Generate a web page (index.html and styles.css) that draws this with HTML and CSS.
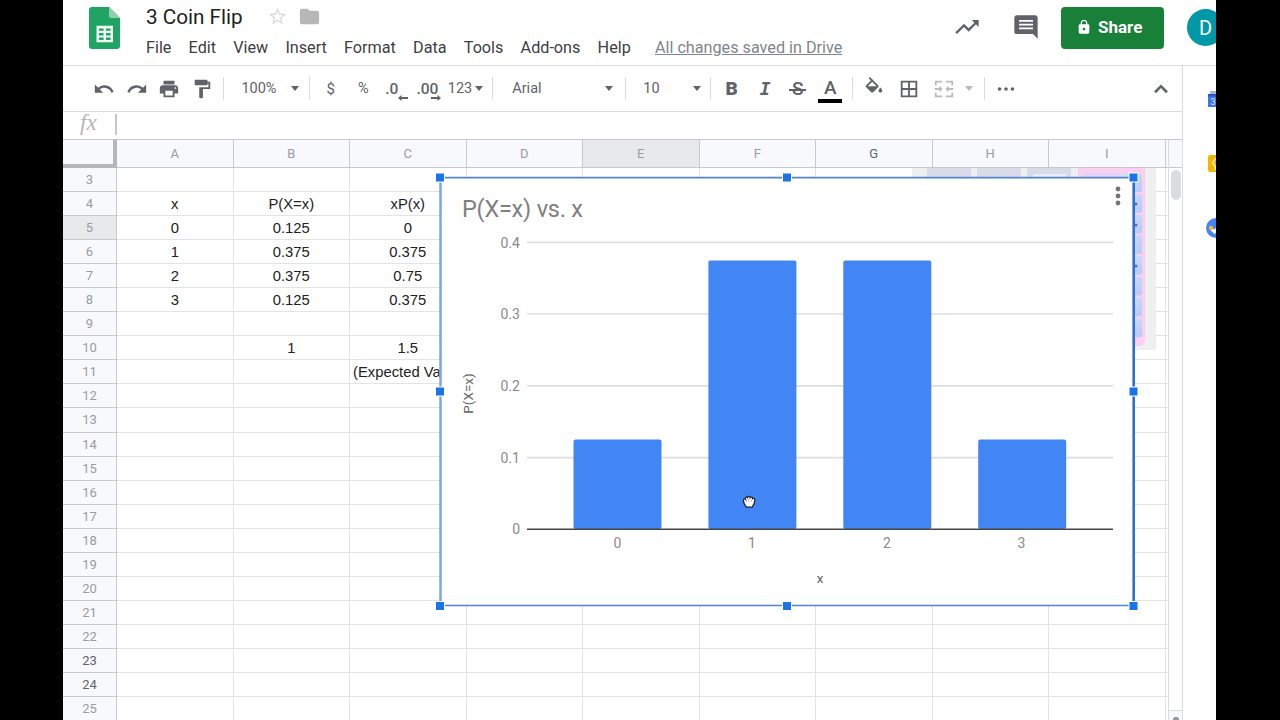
FILE: index.html
```html
<!DOCTYPE html>
<html lang="en">
<head>
    <meta charset="UTF-8">
    <meta name="viewport" content="width=device-width, initial-scale=1.0">
    <title>3 Coin Flip</title>
    <link rel="stylesheet" href="styles.css">
</head>
<body>
    <div class="app">
        <div class="main">
            <!-- Header -->
            <header class="header">
                <svg class="logo" viewBox="0 0 31 42" width="31" height="42">
                    <path fill="#1fa463" d="M3 0h17l11 11v28a3 3 0 0 1-3 3H3a3 3 0 0 1-3-3V3a3 3 0 0 1 3-3z"/>
                    <path fill="#8ed1b1" d="M20 0l11 11H22a2 2 0 0 1-2-2z"/>
                    <path fill="#f1f8f4" fill-rule="evenodd" d="M7.500 18.800h16.500v16.500H7.500zM10 21.400v2.400h4.600v-2.400zM17 21.400v2.400h4.600v-2.400zM10 26v2.400h4.600V26zM17 26v2.400h4.600V26zM10 30.500v2.400h4.600v-2.400zM17 30.500v2.400h4.600v-2.400z"/>
                </svg>
                <div class="titles">
                    <div class="title-row">
                        <span class="doc-title">3 Coin Flip</span>
                        <svg class="star" viewBox="0 0 24 24" width="21" height="21"><path fill="#dcdcdc" d="M22 9.240l-7.190-.62L12 2 9.190 8.630 2 9.240l5.460 4.730L5.820 21 12 17.270 18.180 21l-1.630-7.030L22 9.240zM12 15.400l-3.760 2.270 1-4.280-3.320-2.880 4.380-.38L12 6.100l1.710 4.040 4.380.38-3.320 2.880 1 4.280L12 15.400z"/></svg>
                        <svg class="folder" viewBox="0 0 24 24" width="23" height="23"><path fill="#b7b7b7" d="M10 4H4c-1.100 0-1.990.9-1.990 2L2 18c0 1.100.9 2 2 2h16c1.100 0 2-.9 2-2V8c0-1.100-.9-2-2-2h-8l-2-2z"/></svg>
                    </div>
                    <nav class="menu">
                        <span>File</span><span>Edit</span><span>View</span><span>Insert</span><span>Format</span><span>Data</span><span>Tools</span><span>Add-ons</span><span>Help</span>
                        <span class="saved">All changes saved in Drive</span>
                    </nav>
                </div>
                <svg class="trend" viewBox="0 0 24 24" width="28" height="28"><path fill="#5f6368" d="M16 6l2.290 2.290-4.880 4.880-4-4L2 16.590 3.410 18l6-6 4 4 6.300-6.290L22 12V6z"/></svg>
                <svg class="comment" viewBox="0 0 24 24" width="28" height="28"><path fill="#5f6368" d="M21.990 4c0-1.100-.89-2-1.990-2H4c-1.100 0-2 .9-2 2v12c0 1.100.9 2 2 2h14l4 4-.01-18zM18 14H6v-1.500h12V14zm0-3.200H6V9.300h12v1.500zm0-3.200H6V6h12v1.600z"/></svg>
                <button class="share">
                    <svg viewBox="0 0 24 24" width="16" height="16"><path fill="#fff" d="M18 8h-1V6c0-2.760-2.240-5-5-5S7 3.240 7 6v2H6c-1.100 0-2 .9-2 2v10c0 1.100.9 2 2 2h12c1.100 0 2-.9 2-2V10c0-1.100-.9-2-2-2zm-6 9c-1.100 0-2-.9-2-2s.9-2 2-2 2 .9 2 2-.9 2-2 2zm3.100-9H8.900V6c0-1.710 1.390-3.100 3.100-3.100s3.100 1.390 3.100 3.100v2z"/></svg>
                    Share
                </button>
            </header>

            <!-- Toolbar -->
            <div class="toolbar">
                <span class="tool"><svg viewBox="0 0 24 24"><path d="M12.500 8c-2.650 0-5.050.99-6.900 2.600L2 7v9h9l-3.620-3.620c1.390-1.160 3.160-1.880 5.120-1.880 3.540 0 6.550 2.310 7.600 5.500l2.370-.78C21.080 11.030 17.150 8 12.500 8z"/></svg></span>
                <span class="tool"><svg viewBox="0 0 24 24"><path d="M18.400 10.600C16.550 8.990 14.150 8 11.500 8c-4.650 0-8.580 3.030-9.960 7.220L3.900 16c1.050-3.190 4.050-5.500 7.600-5.500 1.950 0 3.730.72 5.120 1.880L13 16h9V7l-3.600 3.600z"/></svg></span>
                <span class="tool"><svg viewBox="0 0 24 24"><path d="M19 8H5c-1.660 0-3 1.340-3 3v6h4v4h12v-4h4v-6c0-1.660-1.340-3-3-3zm-3 11H8v-5h8v5zm3-7c-.55 0-1-.45-1-1s.45-1 1-1 1 .45 1 1-.45 1-1 1zm-1-9H6v4h12V3z"/></svg></span>
                <span class="tool"><svg viewBox="0 0 24 24"><path d="M18 4V3c0-.55-.45-1-1-1H5c-.55 0-1 .45-1 1v4c0 .55.45 1 1 1h12c.55 0 1-.45 1-1V6h1v4H9v11c0 .55.45 1 1 1h2c.55 0 1-.45 1-1v-9h8V4h-3z"/></svg></span>
                <span class="sep"></span>
                <span class="select zoom">100%<i class="arrow"></i></span>
                <span class="sep"></span>
                <span class="tool num dollar">$</span>
                <span class="tool num percent">%</span>
                <span class="tool num dec less">.0<svg class="dec-arrow" viewBox="0 0 10 6"><path d="M0 3l3.500-3v2H10v2H3.500v2z"/></svg></span>
                <span class="tool num dec">.00<svg class="dec-arrow" viewBox="0 0 10 6"><path d="M10 3L6.500 0v2H0v2h6.500v2z"/></svg></span>
                <span class="select formats">123<i class="arrow"></i></span>
                <span class="sep"></span>
                <span class="select font">Arial<i class="arrow"></i></span>
                <span class="sep"></span>
                <span class="select size">10<i class="arrow"></i></span>
                <span class="sep"></span>
                <span class="tool bold">B</span>
                <span class="tool italic">I</span>
                <span class="tool strike">S</span>
                <span class="tool color">A</span>
                <span class="sep"></span>
                <span class="tool fill"><svg viewBox="0 0 24 24"><path d="M16.560 8.940L7.620 0 6.210 1.410l2.380 2.380-5.150 5.150c-.59.59-.59 1.540 0 2.120l5.500 5.500c.29.29.68.44 1.060.44s.77-.15 1.060-.44l5.500-5.500c.59-.58.59-1.530 0-2.120zM5.210 10L10 5.210 14.790 10H5.210zM19 11.500s-2 2.170-2 3.500c0 1.100.9 2 2 2s2-.9 2-2c0-1.330-2-3.500-2-3.500z"/></svg></span>
                <span class="tool borders"><svg viewBox="0 0 24 24"><path d="M3 3v18h18V3H3zm8 16H5v-6h6v6zm0-8H5V5h6v6zm8 8h-6v-6h6v6zm0-8h-6V5h6v6z"/></svg></span>
                <span class="tool merge"><svg viewBox="0 0 24 24"><path d="M2 3h8v2H4v3H2zM14 3h8v5h-2V5h-6zM2 16h2v3h6v2H2zM20 16h2v5h-8v-2h6zM2 11h5V8.500l3.500 3.500L7 15.500V13H2zM22 11h-5V8.500L13.500 12l3.500 3.500V13h5z"/></svg><i class="arrow light"></i></span>
                <span class="sep"></span>
                <span class="tool more"><svg viewBox="0 0 24 24"><path d="M5 10a2 2 0 1 0 0 4 2 2 0 0 0 0-4zm7 0a2 2 0 1 0 0 4 2 2 0 0 0 0-4zm7 0a2 2 0 1 0 0 4 2 2 0 0 0 0-4z"/></svg></span>
                <span class="tool collapse"><svg viewBox="0 0 24 24"><path d="M12 7l-7.500 7.500 2 2L12 11l5.500 5.500 2-2z"/></svg></span>
            </div>

            <div class="formula"><span class="fx">fx</span><span class="caret"></span></div>

            <!-- Sheet -->
            <div class="sheet">
                <div class="grid" id="grid"></div>
                <div class="scroll">
                    <div class="scroll-head"></div>
                    <div class="thumb"></div>
                    <div class="scroll-foot"></div>
                </div>

                <!-- Picture and chart floating over the cells -->
                <svg class="overlay" viewBox="63 168 1105 552" width="1105" height="552">
                    <defs>
                        <linearGradient id="key" x1="0" y1="0" x2="1" y2="1">
                            <stop offset="0" stop-color="#d3e3fb"/>
                            <stop offset="1" stop-color="#b9c8f2"/>
                        </linearGradient>
                    </defs>
                    <rect x="912" y="168" width="244" height="182" fill="#efeff0"/>
                    <rect x="927" y="168" width="44" height="12" fill="#d9dce8"/>
                    <rect x="977" y="168" width="44" height="12" fill="#d9dce8"/>
                    <rect x="1027" y="168" width="44" height="12" fill="#d9dce8"/>
                    <rect x="1033" y="174" width="33" height="4" fill="#e9effa"/>
                    <path d="M1078 168h67v172a6 6 0 0 1-6 6h-61z" fill="#f9cff2"/>
                    <rect x="1084" y="173" width="52" height="5" fill="#e3d3f3"/>
                    <g id="keys" fill="url(#key)"></g>
                    <g fill="#5570b8">
                        <circle cx="1136" cy="204" r="1.500"/><circle cx="1136" cy="225" r="1.500"/><circle cx="1136" cy="266" r="1.500"/>
                    </g>

                    <rect x="440.500" y="178" width="693" height="427.500" fill="#fff"/>
                    <path d="M440.500 177V606" stroke="#7ba7e6" stroke-width="2.500"/>
                    <path d="M440 177.600H1134M440 605.500H1134" stroke="#5583cb" stroke-width="1.700"/>
                    <path d="M1133.700 177V606" stroke="#2f6fd2" stroke-width="2.600"/>

                    <text class="chart-title" x="462" y="217" textLength="121">P(X=x) vs. x</text>
                    <g fill="#757575">
                        <circle cx="1118" cy="189" r="2.400"/><circle cx="1118" cy="196" r="2.400"/><circle cx="1118" cy="203" r="2.400"/>
                    </g>
                    <path d="M527 242.300H1113M527 314H1113M527 385.800H1113M527 457.700H1113" stroke="#dedede" stroke-width="1.700"/>
                    <g id="bars" fill="#4285f4"></g>
                    <path d="M527 529.300H1113" stroke="#444" stroke-width="1.500"/>
                    <g class="axis" text-anchor="end">
                        <text x="520" y="247.500">0.4</text>
                        <text x="520" y="319">0.3</text>
                        <text x="520" y="390.500">0.2</text>
                        <text x="520" y="462.500">0.1</text>
                        <text x="520" y="534">0</text>
                    </g>
                    <g class="axis" text-anchor="middle">
                        <text x="617.500" y="548">0</text>
                        <text x="752" y="548">1</text>
                        <text x="887" y="548">2</text>
                        <text x="1021.500" y="548">3</text>
                    </g>
                    <text class="axis-title" text-anchor="middle" x="820" y="583">x</text>
                    <text class="axis-title" text-anchor="middle" transform="translate(472.500 393.500) rotate(-90)">P(X=x)</text>

                    <g id="handles" fill="#1a73e8" stroke="#fff" stroke-width="1"></g>

                    <!-- Grab cursor -->
                    <path d="M743.500 500.500c-.3-1.500 1.200-2 2-1.200-.6-2.200 1-3 2-1.600.3-1.700 2.400-1.700 2.700 0 .9-1.200 2.500-.7 2.500.9 1.200-.8 2.400 0 2.200 1.500-.2 3.200-1.100 4.700-2.700 7h-5.800c-1.500-1.800-3.100-3.800-2.900-6.600z" fill="#fff" stroke="#222" stroke-width="1.200"/>
                    <path d="M746.300 499.500v3M748.800 498.500v3.500M751.300 499v3" stroke="#999" stroke-width=".6"/>
                </svg>
            </div>
        </div>

        <!-- Side panel -->
        <aside class="side">
            <div class="side-top"><div class="avatar">D</div></div>
            <svg class="side-icon calendar" viewBox="0 0 20 18" width="20" height="18"><path fill="#a9b7cc" d="M2 0h16v4H2z"/><path fill="#3b78e7" d="M0 3h19v13H0z"/><path fill="#2a56c6" d="M0 3h19v2.500H0z"/><text x="2.500" y="13.500" font-size="9" fill="#dfe8fb">3</text></svg>
            <svg class="side-icon keep" viewBox="0 0 20 18" width="20" height="18"><rect width="20" height="17" rx="2" fill="#f4b400"/><path fill="none" stroke="#fff3cf" stroke-width="1.500" d="M7.500 11.500c-4-2.500-2.500-8 2.500-8s6.500 5.500 2.500 8v2.500h-5z"/></svg>
            <svg class="side-icon tasks" viewBox="0 0 20 20" width="20" height="20"><circle cx="10" cy="10" r="10" fill="#4285f4"/><path d="M5 10.500l3.500 3.500L15 6" fill="none" stroke="#fff" stroke-width="3"/><circle cx="5" cy="10" r="2.200" fill="#f5b63c"/></svg>
        </aside>
    </div>

    <script>
        const columns = ['A', 'B', 'C', 'D', 'E', 'F', 'G', 'H', 'I'];
        const values = {
            A4: 'x', B4: 'P(X=x)', C4: 'xP(x)',
            A5: '0', B5: '0.125', C5: '0',
            A6: '1', B6: '0.375', C6: '0.375',
            A7: '2', B7: '0.375', C7: '0.75',
            A8: '3', B8: '0.125', C8: '0.375',
            B10: '1', C10: '1.5',
            C11: '(Expected Va'
        };
        const grid = document.getElementById('grid');

        function addCell(className, text) {
            const cell = document.createElement('div');
            cell.className = className;
            cell.textContent = text || '';
            grid.appendChild(cell);
        }

        // Column headers
        addCell('corner');
        columns.forEach(col => {
            addCell('col-head' + (col === 'E' ? ' active' : '') + (col === 'G' ? ' dark' : ''), col);
        });
        addCell('col-head edge');

        // Rows 3 to 25
        for (let row = 3; row <= 25; row++) {
            addCell('row-head' + (row === 5 ? ' active' : '') + (row === 23 || row === 24 ? ' dark' : ''), String(row));
            columns.forEach(col => addCell('cell' + (col + row === 'C11' ? ' long' : ''), values[col + row]));
            addCell('cell edge');
        }

        function addRect(parent, x, y, width, height, rx) {
            const rect = document.createElementNS('http://www.w3.org/2000/svg', 'rect');
            Object.entries({ x, y, width, height, rx }).forEach(([name, value]) => rect.setAttribute(name, value));
            document.getElementById(parent).appendChild(rect);
        }

        // Keys of the picture behind the chart
        for (let i = 0; i < 8; i++) {
            addRect('keys', 1120, 173.5 + i * 20.7, 22, 18.5, 2);
        }

        // Bars of the chart
        const base = 529;
        [0.125, 0.375, 0.375, 0.125].forEach((p, i) => {
            const height = p * 716;
            addRect('bars', 573.5 + i * 134.9, base - height, 88, height, 2);
        });

        // Resize handles
        [440, 787, 1133.5].forEach(x => {
            [177.5, 391.5, 606].forEach(y => {
                if (x !== 787 || y !== 391.5) {
                    addRect('handles', x - 4.5, y - 4.5, 9, 9, 0);
                }
            });
        });
    </script>
</body>
</html>
```

FILE: styles.css
```css
* {
    box-sizing: border-box;
}
body {
    margin: 0;
    background-color: #000;
    font-family: Roboto, Arial, sans-serif;
    overflow: hidden;
}
.app {
    display: flex;
    width: 1153px;
    height: 720px;
    margin-left: 63px;
    background-color: #fff;
    overflow: hidden;
}
.main {
    width: 1119px;
    display: flex;
    flex-direction: column;
}

/* Header */
.header {
    display: flex;
    height: 66px;
    padding-left: 26px;
    border-bottom: 1px solid #dadce0;
}
.logo {
    flex: none;
    margin-top: 7px;
}
.titles {
    flex: none;
    width: 733px;
    padding-left: 26px;
}
.title-row {
    display: flex;
    align-items: center;
    height: 33px;
}
.doc-title {
    width: 121px;
    font-size: 20.7px;
    color: #202124;
    white-space: nowrap;
}
.folder {
    margin-left: 10px;
}
.menu {
    display: flex;
    gap: 17.2px;
    height: 28px;
    align-items: center;
    font-size: 16.2px;
    color: #3c4043;
    white-space: nowrap;
}
.saved {
    margin-left: 7px;
    color: #80868b;
    text-decoration: underline;
}
.trend,
.comment {
    margin-top: 13px;
    flex: none;
}
.trend {
    margin-left: 100px;
}
.comment {
    margin-left: 31px;
}
.share {
    display: flex;
    align-items: center;
    gap: 6px;
    flex: none;
    width: 103px;
    height: 42px;
    margin: 7px 0 0 21px;
    padding: 0 0 2px 15px;
    border: none;
    border-radius: 4px;
    background-color: #188038;
    color: #fff;
    font: bold 17px Roboto, sans-serif;
}

/* Toolbar */
.toolbar {
    display: flex;
    align-items: center;
    height: 46px;
    padding-left: 25px;
    border-bottom: 1px solid #dadce0;
    font-size: 14.5px;
    color: #5f6368;
}
.tool {
    display: flex;
    align-items: center;
    justify-content: center;
    flex: none;
    width: 32.6px;
    height: 30px;
}
.tool svg {
    flex: none;
    width: 22px;
    height: 22px;
    fill: #5f6368;
}
.sep {
    flex: none;
    width: 1px;
    height: 23px;
    margin-left: 5px;
    background-color: #dadce0;
}
.select {
    display: flex;
    flex: none;
    align-items: center;
    justify-content: space-between;
}
.arrow {
    border: 4.5px solid transparent;
    border-top: 5px solid #5f6368;
    border-bottom: 0;
}
.zoom {
    width: 58px;
    margin: 0 5px 0 17px;
}
.num {
    font-size: 15px;
}
.dollar {
    margin-left: 4px;
}
.percent {
    font-size: 14.5px;
}
.dec {
    position: relative;
    padding-right: 2px;
    font-weight: 500;
    font-size: 15.5px;
}
.less {
    padding-right: 8px;
}
.tool .dec-arrow {
    position: absolute;
    right: 4px;
    bottom: 3px;
    width: 10px;
    height: 6px;
}
.formats {
    width: 35px;
    margin: 0 4px 0 3px;
}
.font {
    width: 101px;
    margin: 0 7px 0 19.5px;
}
.size {
    width: 58px;
    margin: 0 4px 0 17px;
}
.bold {
    margin-left: 4px;
    font-size: 19px;
    font-weight: 900;
}
.italic {
    margin-left: 1px;
    font: italic bold 18px "DejaVu Sans Mono", monospace;
}
.strike {
    position: relative;
    font-size: 19px;
    font-weight: 500;
}
.strike::after {
    content: "";
    position: absolute;
    left: 8px;
    top: 15px;
    width: 17px;
    height: 2px;
    background-color: #5f6368;
}
.color {
    position: relative;
    padding-bottom: 3px;
    font-size: 19px;
    font-weight: 500;
}
.color::after {
    content: "";
    position: absolute;
    left: 4px;
    bottom: 1px;
    width: 24px;
    height: 4px;
    background-color: #000;
}
.fill {
    margin-left: 5px;
    padding-bottom: 1px;
}
.borders {
    margin-left: 2px;
}
.merge {
    width: 51px;
    margin-left: 3px;
    gap: 10px;
}
.merge svg {
    fill: #b9bbbe;
}
.arrow.light {
    border-top-color: #b9bbbe;
}
.more {
    margin-left: 5px;
}
.collapse {
    margin: 0 5px 0 auto;
}

/* Formula bar */
.formula {
    display: flex;
    align-items: center;
    height: 27px;
    padding: 0 0 2px 17px;
}
.fx {
    width: 35px;
    margin-top: -3px;
    font: italic 23px "Liberation Serif", serif;
    color: #b5b5b5;
}
.caret {
    width: 2px;
    height: 21px;
    background-color: #c6c6c6;
}

/* Sheet */
.sheet {
    position: relative;
    display: flex;
    flex: 1;
    overflow: hidden;
}
.grid {
    display: grid;
    flex: none;
    grid-template-columns: 54px repeat(9, 116.5px) 2.5px;
    grid-template-rows: 29px;
    grid-auto-rows: 24.05px;
    width: 1105px;
}
.corner,
.col-head,
.row-head,
.cell {
    display: flex;
    align-items: center;
    justify-content: center;
    border-right: 1px solid #e2e3e3;
    border-bottom: 1px solid #e2e3e3;
    white-space: nowrap;
}
.corner,
.col-head {
    border-top: 1px solid #c8c9cb;
}
.corner,
.col-head,
.row-head {
    background-color: #f8f9fc;
    border-right-color: #c8c9cb;
    border-bottom-color: #c8c9cb;
    color: #9a9c9f;
    font-size: 13px;
}
.corner {
    border-right: 4px solid #b7b7b7;
    border-bottom: 4px solid #b7b7b7;
}
.col-head.active,
.row-head.active {
    background-color: #e8e9ed;
}
.dark {
    color: #5f6368;
}
.cell {
    font-family: "Liberation Sans", Arial, sans-serif;
    font-size: 14.8px;
    color: #222;
}
.cell.long {
    justify-content: flex-start;
    padding-left: 3px;
}
.edge {
    border-right: none;
}
.scroll {
    display: flex;
    flex-direction: column;
    align-items: center;
    width: 14px;
    border-left: 1px solid #dadce0;
}
.scroll-head {
    align-self: stretch;
    height: 29px;
    border-top: 1px solid #c8c9cb;
    border-bottom: 1px solid #c8c9cb;
    background-color: #f8f9fa;
}
.thumb {
    width: 10px;
    height: 30px;
    margin-top: 2px;
    border-radius: 5px;
    background-color: #dadce0;
}
.scroll-foot {
    align-self: stretch;
    height: 10px;
    margin-top: auto;
    border-top: 1px solid #dadce0;
    background: radial-gradient(circle at 7px 9px, #999 3px, #f8f9fa 3.5px);
}

/* Chart */
.overlay {
    position: absolute;
    left: 0;
    top: 29px;
}
.overlay text {
    font-family: Roboto, sans-serif;
}
.chart-title {
    font-size: 23.5px;
    fill: #808080;
}
.axis {
    font-size: 14px;
    fill: #8a8a8a;
}
.axis-title {
    font-size: 13.5px;
    fill: #666;
}

/* Side panel */
.side {
    display: flex;
    flex: none;
    flex-direction: column;
    width: 60px;
    background: linear-gradient(#dadce0, #dadce0) 0 66px / 1px 654px no-repeat;
}
.side-top {
    flex: none;
    height: 66px;
    padding: 9px 0 0 5px;
    border-bottom: 1px solid #dadce0;
}
.avatar {
    width: 37px;
    height: 37px;
    border-radius: 50%;
    background-color: #0097a7;
    color: #fff;
    font-size: 20px;
    line-height: 38px;
    text-align: center;
}
.side-icon {
    flex: none;
    margin-left: 26px;
}
.calendar {
    margin-top: 25px;
}
.keep {
    margin-top: 46px;
}
.tasks {
    margin: 45px 0 0 24px;
}
```
